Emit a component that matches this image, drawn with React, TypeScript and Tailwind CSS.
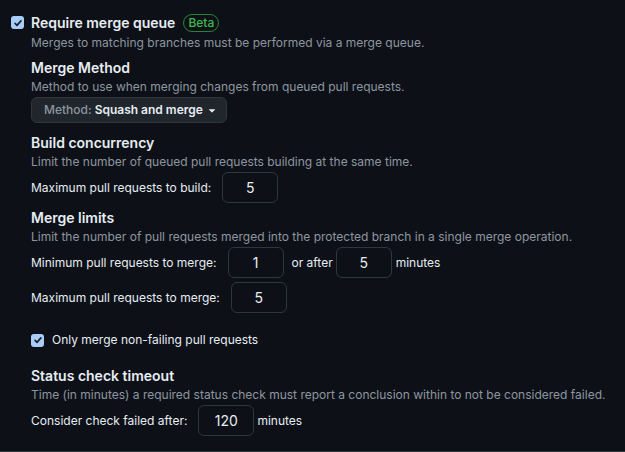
import type { ReactNode } from 'react';

// ネイティブ風のチェックボックス（淡い青の塗りに濃いチェック）
const Check = () => (
  <span className="flex h-[13px] w-[13px] shrink-0 items-center justify-center rounded-[3px] bg-[#a8cdfb]">
    <svg viewBox="0 0 12 12" className="h-[10px] w-[10px]" fill="none" stroke="#1b1f24" strokeWidth={2} strokeLinecap="round" strokeLinejoin="round">
      <path d="M2.5 6.5l2.3 2.3L9.5 3.5" />
    </svg>
  </span>
);

const NumBox = ({ value }: { value: string }) => (
  <div className="flex h-[31px] w-[56px] items-center justify-center rounded-md border border-[#30363d] bg-[#0d1117] text-[14px] text-[#e6edf3]">
    {value}
  </div>
);

const Heading = ({ title, desc }: { title: string; desc: string }) => (
  <>
    <h3 className="text-[14px] font-semibold leading-[20px] text-[#e6edf3]">{title}</h3>
    <p className="text-[12px] leading-[18px] text-[#8d96a0]">{desc}</p>
  </>
);

const Row = ({ children }: { children: ReactNode }) => (
  <div className="flex items-center gap-[11px] text-[12px] text-[#e6edf3]">{children}</div>
);

export default function App() {
  return (
    <div
      className="h-[452px] w-[625px] overflow-hidden border-b border-[#30363d] bg-[#0d1117] pl-[11px] pt-[12px]"
      style={{ fontFamily: 'Inter, "Liberation Sans", sans-serif' }}
    >
      {/* メイン見出し */}
      <div className="flex items-start gap-[7px]">
        <div className="pt-[4px]">
          <Check />
        </div>
        <div className="flex flex-col">
          <div className="flex items-center gap-[8px]">
            <span className="text-[14px] font-semibold leading-[22px] text-[#e6edf3]">Require merge queue</span>
            <span className="rounded-full border border-[#238636] px-[4px] text-[12px] font-medium leading-[16px] text-[#3fb950]">
              Beta
            </span>
          </div>
          <p className="text-[12px] leading-[18px] text-[#8d96a0]">Merges to matching branches must be performed via a merge queue.</p>

          {/* マージ方式 */}
          <div className="mt-[6px]">
            <Heading title="Merge Method" desc="Method to use when merging changes from queued pull requests." />
          </div>
          <button className="mt-[1px] flex h-[26px] w-[196px] items-center gap-[4px] whitespace-nowrap rounded-md border border-[#30363d] bg-[#21262d] pl-[12px] text-[12px] font-medium">
            <span className="text-[#8d96a0]">Method:</span>
            <span className="-ml-[1px] font-semibold text-[#e6edf3]">Squash and merge</span>
            <svg viewBox="0 0 16 16" className="-ml-[2px] h-[14px] w-[14px] shrink-0" fill="#e6edf3">
              <path d="M4.427 7.427l3.396 3.396a.25.25 0 00.354 0l3.396-3.396A.25.25 0 0011.396 7H4.604a.25.25 0 00-.177.427z" />
            </svg>
          </button>

          {/* ビルド並列数 */}
          <div className="mt-[10px]">
            <Heading title="Build concurrency" desc="Limit the number of queued pull requests building at the same time." />
          </div>
          <div className="mt-[1px]">
            <Row>
              <span>Maximum pull requests to build:</span>
              <NumBox value="5" />
            </Row>
          </div>

          {/* マージ上限 */}
          <div className="mt-[5px]">
            <Heading title="Merge limits" desc="Limit the number of pull requests merged into the protected branch in a single merge operation." />
          </div>
          <div className="mt-[1px] flex flex-col gap-[4px]">
            <Row>
              <span>Minimum pull requests to merge:</span>
              <NumBox value="1" />
              <span className="-ml-[3px]">or after</span>
              <div className="-ml-[8px]">
                <NumBox value="5" />
              </div>
              <span className="-ml-[7px]">minutes</span>
            </Row>
            <Row>
              <span>Maximum pull requests to merge:</span>
              <NumBox value="5" />
            </Row>
          </div>

          <label className="mt-[18px] flex h-[18px] items-center gap-[8px] text-[12px] text-[#e6edf3]">
            <Check />
            <span>Only merge non-failing pull requests</span>
          </label>

          {/* ステータスチェックのタイムアウト */}
          <div className="mt-[17px]">
            <Heading title="Status check timeout" desc="Time (in minutes) a required status check must report a conclusion within to not be considered failed." />
          </div>
          <div className="mt-[1px]">
            <Row>
              <span>Consider check failed after:</span>
              <NumBox value="120" />
              <span className="-ml-[8px]">minutes</span>
            </Row>
          </div>
        </div>
      </div>
    </div>
  );
}
